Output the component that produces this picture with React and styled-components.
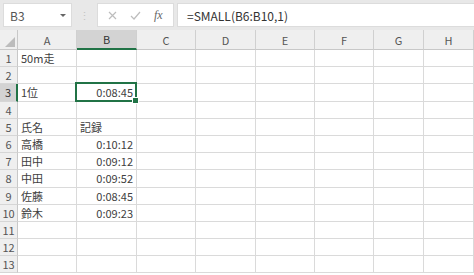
import React from 'react';
import styled, { createGlobalStyle } from 'styled-components';

const Global = createGlobalStyle`
  html, body { margin: 0; padding: 0; background: #fff; }
  body {
    font-family: "Noto Sans CJK JP", "Noto Sans", sans-serif;
    color: #404040;
    overflow: hidden;
  }
`;

const Page = styled.div`
  width: 474px;
  height: 275px;
  display: flex;
  flex-direction: column;
  overflow: hidden;
`;

const FormulaBar = styled.div`
  height: 30px;
  flex: none;
  display: flex;
  align-items: flex-start;
  gap: 3px;
  padding: 3px 0 0 3px;
  box-sizing: border-box;
  background: #e8e8e8;
`;

const Box = styled.div`
  height: 24px;
  box-sizing: border-box;
  background: #fff;
  border: 1px solid #dcdcdc;
  display: flex;
  align-items: center;
`;

const NameBox = styled(Box)`
  width: 69px;
  padding: 0 5px 0 6px;
  justify-content: space-between;
  font-size: 12px;
  color: #555;
`;

const Caret = styled.span`
  width: 0;
  height: 0;
  border-left: 3px solid transparent;
  border-right: 3px solid transparent;
  border-top: 3px solid #666;
`;

const Dots = styled.div`
  width: 19px;
  height: 24px;
  display: flex;
  align-items: center;
  justify-content: center;
  color: #c4c4c4;
  font-size: 11px;
`;

const ButtonBox = styled(Box)`
  width: 77px;
  justify-content: space-around;
  padding: 0 4px;
  color: #b8b8b8;
`;

const Fx = styled.span`
  font-family: "Liberation Serif", serif;
  font-style: italic;
  font-size: 12px;
  color: #666;
`;

const FormulaInput = styled(Box)`
  flex: 1;
  border-right: none;
  padding-left: 9px;
  font-size: 12px;
  color: #333;
`;

const Sheet = styled.div`
  display: grid;
  grid-template-columns: 18px 59px 60px 59px 60px 59px 59px 50px 50px;
  grid-template-rows: 20px repeat(13, 17.2px);
  font-size: 11px;
`;

const Cell = styled.div`
  box-sizing: border-box;
  border-right: 1px solid #dadada;
  border-bottom: 1px solid #dadada;
  display: flex;
  align-items: center;
  padding: 0 3px;
  white-space: nowrap;
  overflow: visible;
  position: relative;
  justify-content: ${p => (p.$right ? 'flex-end' : 'flex-start')};
  color: #404040;
`;

const Selected = styled(Cell)`
  &::after {
    content: '';
    position: absolute;
    left: -2px;
    top: -2px;
    right: -1px;
    bottom: -1px;
    border: 2px solid #217346;
    pointer-events: none;
  }
  &::before {
    content: '';
    position: absolute;
    right: -3px;
    bottom: -3px;
    width: 5px;
    height: 5px;
    background: #217346;
    border: 1px solid #fff;
    z-index: 2;
  }
`;

const ColHead = styled.div`
  box-sizing: border-box;
  background: ${p => (p.$active ? '#d3d3d3' : '#efefef')};
  border-right: 1px solid #d0d0d0;
  border-bottom: ${p => (p.$active ? '2px solid #217346' : '1px solid #c8c8c8')};
  display: flex;
  align-items: center;
  justify-content: center;
  font-size: 11px;
  color: ${p => (p.$active ? '#333' : '#555')};
`;

const RowHead = styled.div`
  box-sizing: border-box;
  background: ${p => (p.$active ? '#d3d3d3' : '#efefef')};
  border-bottom: 1px solid #d6d6d6;
  border-right: ${p => (p.$active ? '2px solid #217346' : '1px solid #c8c8c8')};
  display: flex;
  align-items: center;
  justify-content: center;
  font-size: 11px;
  color: ${p => (p.$active ? '#333' : '#555')};
`;

const Corner = styled.div`
  box-sizing: border-box;
  background: #efefef;
  border-right: 1px solid #c8c8c8;
  border-bottom: 1px solid #c8c8c8;
  display: flex;
  align-items: flex-end;
  justify-content: flex-end;
  padding: 0 2px 2px 0;
`;

const cols = ['A', 'B', 'C', 'D', 'E', 'F', 'G', 'H'];

const data = {
  1: { A: '50m走' },
  3: { A: '1位', B: '0:08:45' },
  5: { A: '氏名', B: '記録' },
  6: { A: '高橋', B: '0:10:12' },
  7: { A: '田中', B: '0:09:12' },
  8: { A: '中田', B: '0:09:52' },
  9: { A: '佐藤', B: '0:08:45' },
  10: { A: '鈴木', B: '0:09:23' },
};

const isTime = v => /^\d+:\d\d:\d\d$/.test(v);

export default function App() {
  const rows = Array.from({ length: 13 }, (_, i) => i + 1);
  return (
    <Page>
      <Global />
      <FormulaBar>
        <NameBox>
          <span>B3</span>
          <Caret />
        </NameBox>
        <Dots>⋮</Dots>
        <ButtonBox>
          <svg width="9" height="9" viewBox="0 0 9 9">
            <path d="M1 1L8 8M8 1L1 8" stroke="#bdbdbd" strokeWidth="1.2" />
          </svg>
          <svg width="11" height="9" viewBox="0 0 11 9">
            <path d="M1 5L4 8L10 1" stroke="#bdbdbd" strokeWidth="1.2" fill="none" />
          </svg>
          <Fx>fx</Fx>
        </ButtonBox>
        <FormulaInput>=SMALL(B6:B10,1)</FormulaInput>
      </FormulaBar>
      <Sheet>
        <Corner>
          <svg width="10" height="10" viewBox="0 0 10 10">
            <path d="M10 0L10 10L0 10Z" fill="#bcbcbc" />
          </svg>
        </Corner>
        {cols.map(c => (
          <ColHead key={c} $active={c === 'B'}>{c}</ColHead>
        ))}
        {rows.map(r => (
          <React.Fragment key={r}>
            <RowHead $active={r === 3}>{r}</RowHead>
            {cols.map(c => {
              const v = data[r] && data[r][c];
              const C = r === 3 && c === 'B' ? Selected : Cell;
              return (
                <C key={c} $right={v && isTime(v)}>
                  {v}
                </C>
              );
            })}
          </React.Fragment>
        ))}
      </Sheet>
    </Page>
  );
}
